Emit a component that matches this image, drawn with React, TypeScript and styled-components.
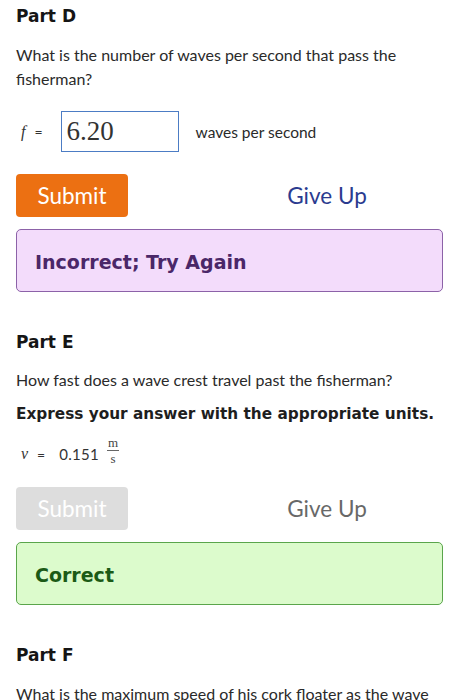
import React from 'react';
import styled, { createGlobalStyle } from 'styled-components';

const GlobalStyle = createGlobalStyle`
  html, body {
    margin: 0;
    padding: 0;
    background: #ffffff;
  }
  body {
    font-family: Lato, 'Open Sans', 'Liberation Sans', sans-serif;
    color: #222222;
  }
`;

const heavy = `'DejaVu Sans', 'Liberation Sans', sans-serif`;

const Page = styled.div`
  padding: 6px 14px 0 16px;
  width: 457px;
  box-sizing: border-box;
  overflow: hidden;
  height: 700px;
`;

const Section = styled.section<{ gap?: number }>`
  margin-top: ${(p) => p.gap ?? 0}px;
`;

const PartTitle = styled.h2`
  margin: 0;
  font-family: ${heavy};
  font-size: 17px;
  line-height: 20px;
  font-weight: 700;
  color: #151515;
`;

const Question = styled.p<{ gap?: number }>`
  margin: ${(p) => p.gap ?? 17}px 0 0;
  font-size: 16px;
  line-height: 24px;
  color: #2a2a2a;
`;

const Instruction = styled.p`
  margin: 10px 0 0;
  font-family: ${heavy};
  font-size: 15.3px;
  line-height: 24px;
  font-weight: 700;
  color: #1e1e1e;
`;

const AnswerRow = styled.div<{ gap?: number }>`
  display: flex;
  align-items: center;
  margin-top: ${(p) => p.gap ?? 20}px;
  padding-left: 5px;
`;

const MathVar = styled.span`
  font-family: 'Liberation Serif', 'DejaVu Serif', serif;
  font-style: italic;
  font-size: 16px;
  color: #333;
`;

const Equals = styled.span<{ after?: number }>`
  font-size: 14px;
  margin: 0 ${(p) => p.after ?? 18}px 0 9px;
  color: #333;
`;

const InputBox = styled.div`
  width: 118px;
  height: 41px;
  box-sizing: border-box;
  border: 1px solid #4c7cc4;
  padding-left: 5px;
  display: flex;
  align-items: center;
  font-family: 'Liberation Serif', 'DejaVu Serif', serif;
  font-size: 27px;
  color: #333;
`;

const UnitText = styled.span`
  margin-left: 17px;
  font-size: 15.5px;
  color: #2a2a2a;
`;

const AnswerValue = styled.span`
  font-size: 15px;
  letter-spacing: 0.3px;
  color: #333;
`;

const Fraction = styled.span`
  display: inline-flex;
  flex-direction: column;
  align-items: center;
  margin-left: 8px;
  font-family: 'Liberation Serif', 'DejaVu Serif', serif;
  font-size: 13px;
  line-height: 10px;
  color: #444;
  transform: translateY(-3px);
`;

const FracTop = styled.span`
  border-bottom: 1px solid #666;
  padding: 0 1px 2px;
`;

const FracBottom = styled.span`
  padding-top: 3px;
`;

const ButtonRow = styled.div<{ gap?: number }>`
  display: flex;
  align-items: center;
  margin-top: ${(p) => p.gap ?? 22}px;
`;

const SubmitButton = styled.button<{ disabled?: boolean }>`
  width: 112px;
  height: 43px;
  border: none;
  border-radius: 4px;
  background: ${(p) => (p.disabled ? '#dddddd' : '#ec7012')};
  color: #ffffff;
  font-family: inherit;
  font-size: 22.5px;
  padding: 0 0 1px;
  cursor: pointer;
`;

const GiveUpButton = styled.button<{ muted?: boolean }>`
  width: 112px;
  height: 43px;
  margin-left: 143px;
  border: none;
  background: transparent;
  color: ${(p) => (p.muted ? '#686868' : '#2b3b8f')};
  font-family: inherit;
  font-size: 22.5px;
  cursor: pointer;
`;

const Feedback = styled.div<{ tone: 'bad' | 'good' }>`
  margin-top: 12px;
  height: 63px;
  box-sizing: border-box;
  border-radius: 5px;
  border: 1px solid ${(p) => (p.tone === 'bad' ? '#8c62a8' : '#5aa54b')};
  background: ${(p) => (p.tone === 'bad' ? '#f3dcfb' : '#dcfbcc')};
  color: ${(p) => (p.tone === 'bad' ? '#4a2768' : '#1b5a16')};
  display: flex;
  align-items: center;
  padding: 2px 0 0 18px;
  font-family: ${heavy};
  font-size: 19px;
  font-weight: 700;
`;

export default function App() {
  return (
    <>
      <GlobalStyle />
      <Page>
        <Section>
          <PartTitle>Part D</PartTitle>
          <Question>What is the number of waves per second that pass the fisherman?</Question>
          <AnswerRow>
            <MathVar>f</MathVar>
            <Equals>=</Equals>
            <InputBox>6.20</InputBox>
            <UnitText>waves per second</UnitText>
          </AnswerRow>
          <ButtonRow>
            <SubmitButton>Submit</SubmitButton>
            <GiveUpButton>Give Up</GiveUpButton>
          </ButtonRow>
          <Feedback tone="bad">Incorrect; Try Again</Feedback>
        </Section>

        <Section gap={40}>
          <PartTitle>Part E</PartTitle>
          <Question gap={16}>How fast does a wave crest travel past the fisherman?</Question>
          <Instruction>Express your answer with the appropriate units.</Instruction>
          <AnswerRow gap={15}>
            <MathVar>v</MathVar>
            <Equals after={14}>=</Equals>
            <AnswerValue>0.151</AnswerValue>
            <Fraction>
              <FracTop>m</FracTop>
              <FracBottom>s</FracBottom>
            </Fraction>
          </AnswerRow>
          <ButtonRow gap={20}>
            <SubmitButton disabled>Submit</SubmitButton>
            <GiveUpButton muted>Give Up</GiveUpButton>
          </ButtonRow>
          <Feedback tone="good">Correct</Feedback>
        </Section>

        <Section gap={40}>
          <PartTitle>Part F</PartTitle>
          <Question>What is the maximum speed of his cork floater as the wave passes by?</Question>
        </Section>
      </Page>
    </>
  );
}
